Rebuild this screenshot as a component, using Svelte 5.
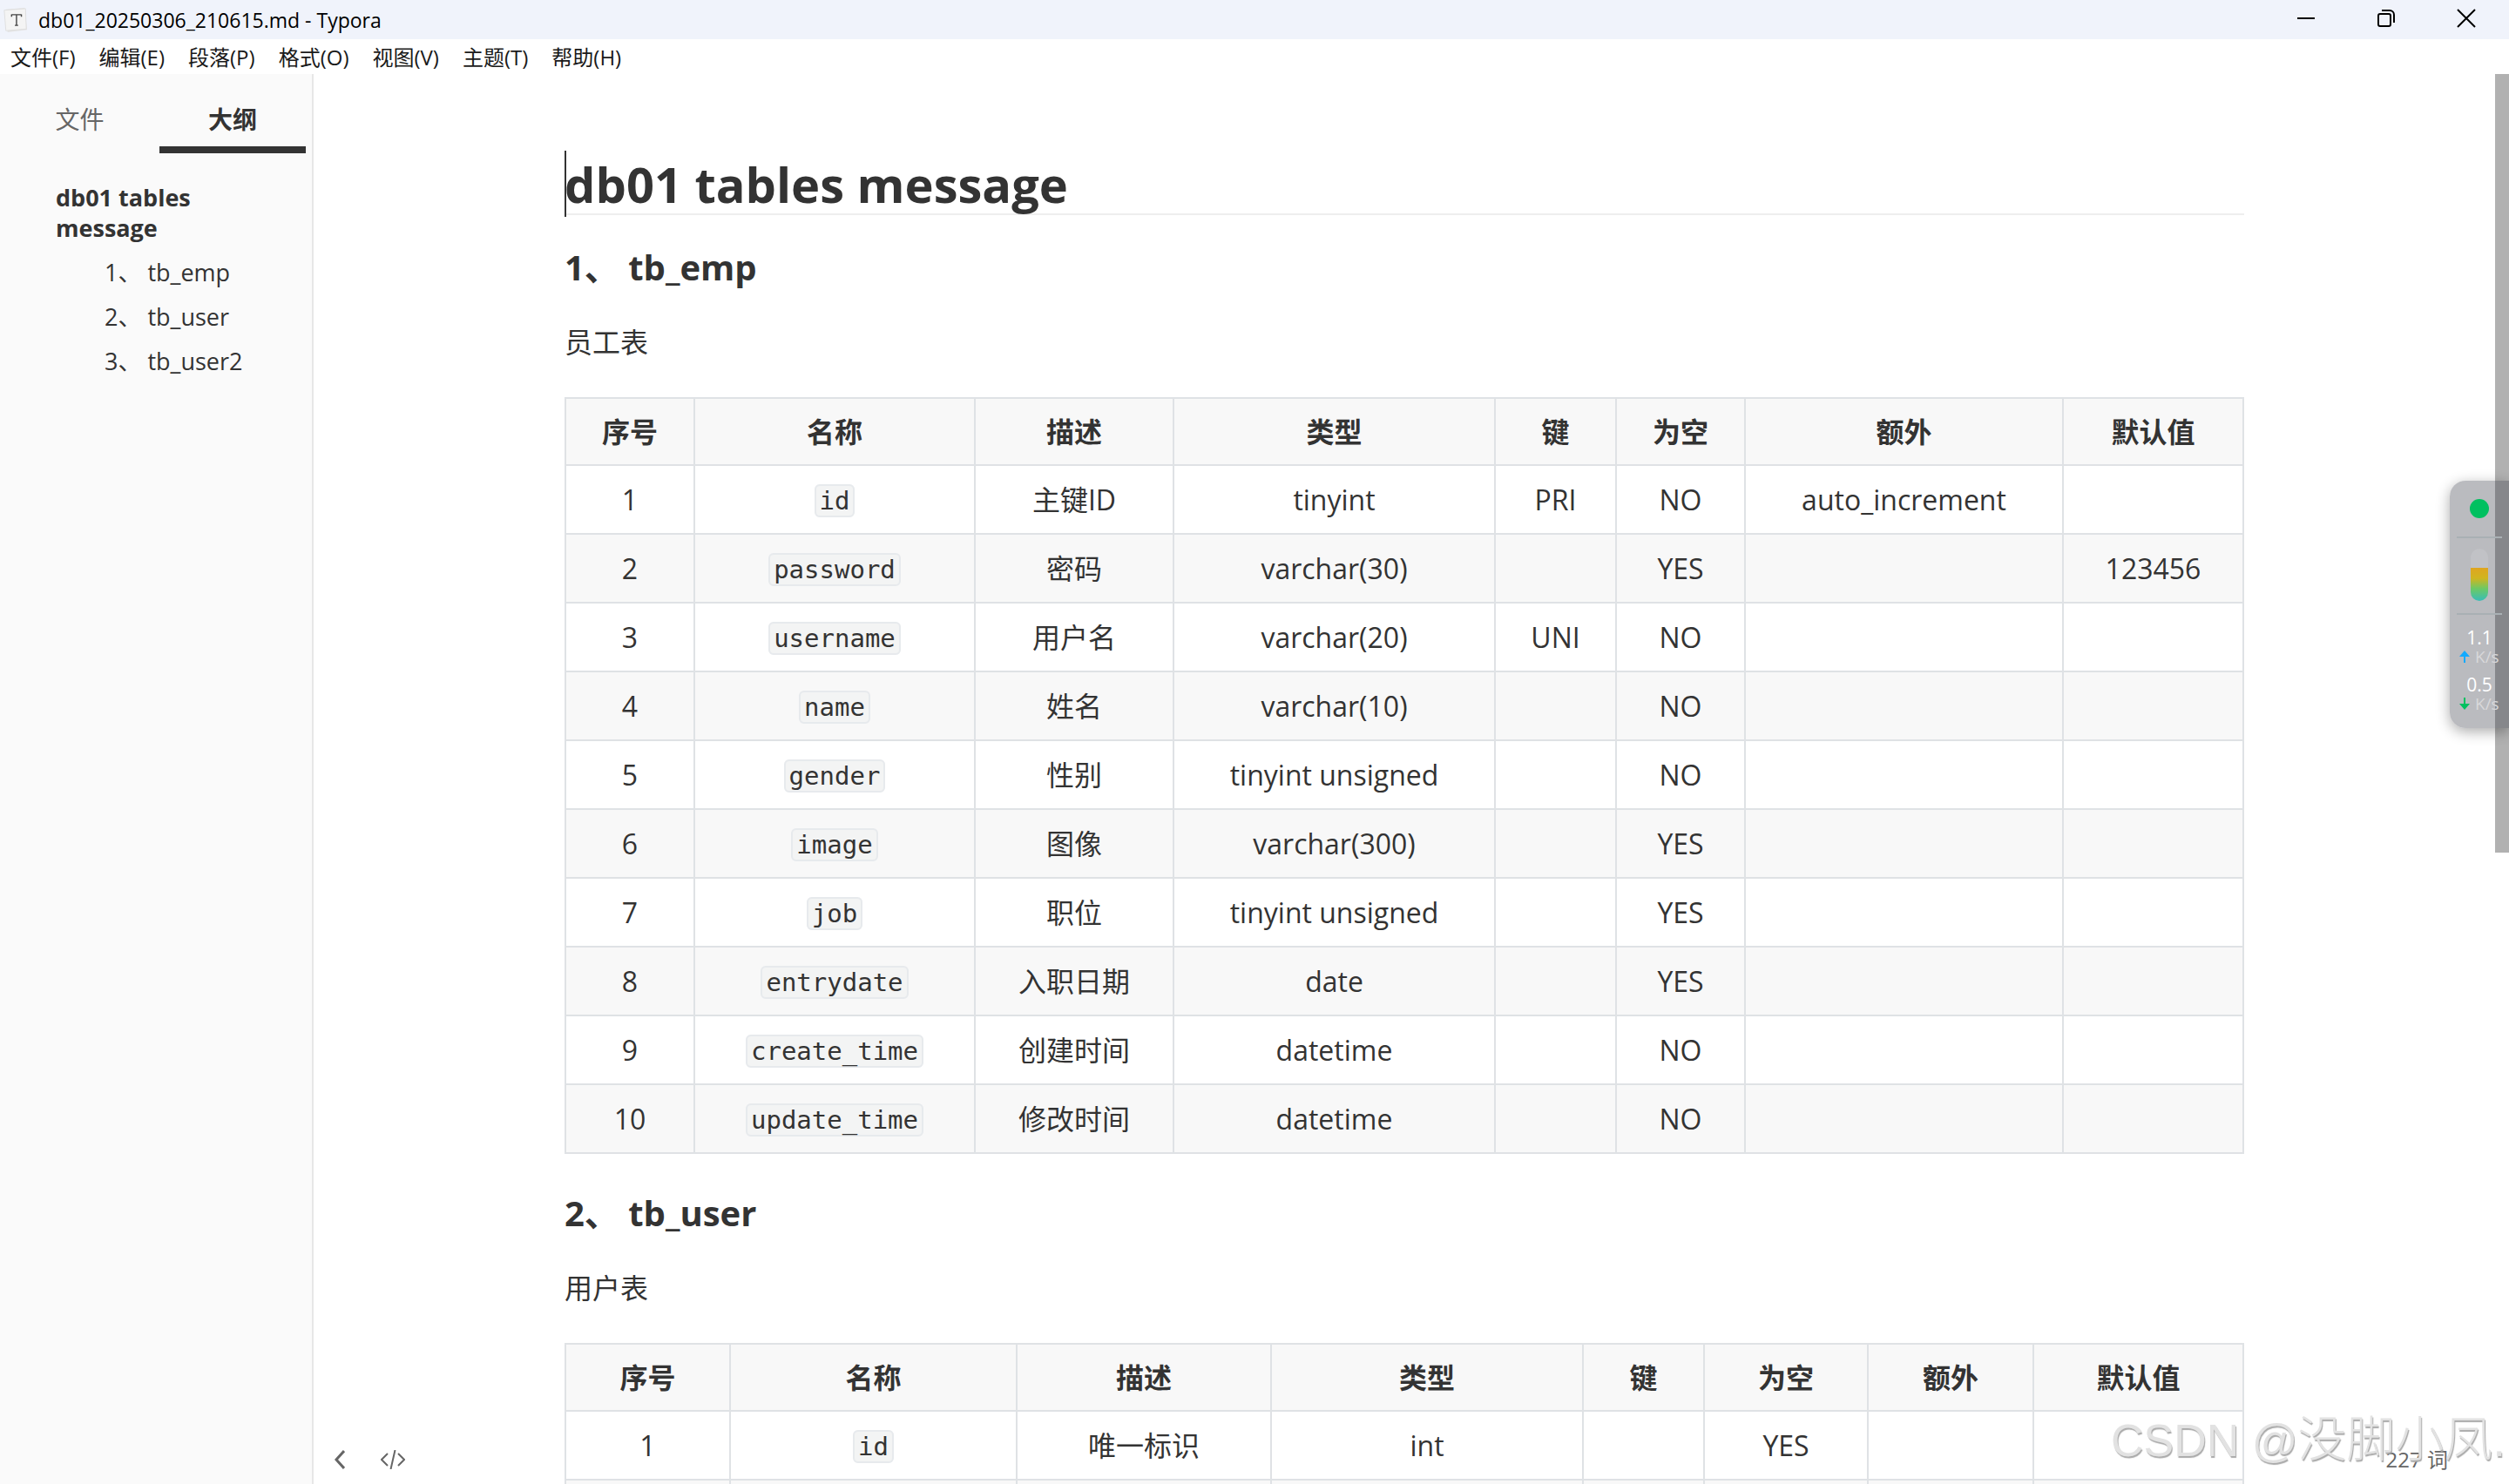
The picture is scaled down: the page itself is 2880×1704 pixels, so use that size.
<script>
  const menus = ['文件(F)', '编辑(E)', '段落(P)', '格式(O)', '视图(V)', '主题(T)', '帮助(H)'];
  const outline = ['1、 tb_emp', '2、 tb_user', '3、 tb_user2'];
  const head = ['序号', '名称', '描述', '类型', '键', '为空', '额外', '默认值'];
  const sections = [
    {
      title: '1、 tb_emp',
      note: '员工表',
      widths: [148, 322, 228, 369, 139, 148, 365, 207],
      rows: [
        ['1', 'id', '主键ID', 'tinyint', 'PRI', 'NO', 'auto_increment', ''],
        ['2', 'password', '密码', 'varchar(30)', '', 'YES', '', '123456'],
        ['3', 'username', '用户名', 'varchar(20)', 'UNI', 'NO', '', ''],
        ['4', 'name', '姓名', 'varchar(10)', '', 'NO', '', ''],
        ['5', 'gender', '性别', 'tinyint unsigned', '', 'NO', '', ''],
        ['6', 'image', '图像', 'varchar(300)', '', 'YES', '', ''],
        ['7', 'job', '职位', 'tinyint unsigned', '', 'YES', '', ''],
        ['8', 'entrydate', '入职日期', 'date', '', 'YES', '', ''],
        ['9', 'create_time', '创建时间', 'datetime', '', 'NO', '', ''],
        ['10', 'update_time', '修改时间', 'datetime', '', 'NO', '', '']
      ]
    },
    {
      title: '2、 tb_user',
      note: '用户表',
      widths: [189, 329, 292, 358, 139, 188, 190, 241],
      rows: [
        ['1', 'id', '唯一标识', 'int', '', 'YES', '', ''],
        ['', '', '', '', '', '', '', '']
      ]
    }
  ];
  const share = (w, all) => (w / all.reduce((a, b) => a + b, 0)) * 100;
</script>

<div class="window">
  <header class="titlebar">
    <svg class="appicon" viewBox="0 0 32 32" aria-hidden="true">
      <path d="M4 3 27 1l3 27-24 3z" fill="#e4e4e4" />
      <path d="M2 4 28 2l1 25-25 2z" fill="#f4f4f4" stroke="#dedede" />
      <path d="M11 9.500h12M17 9.500v13M11 9v3M23 9v3M15 22.500h4" fill="none" stroke="#444" stroke-width="1.500" />
    </svg>
    <span class="caption">db01_20250306_210615.md - Typora</span>
    <div class="controls">
      <button aria-label="最小化"><svg viewBox="0 0 20 20"><path d="M0 10h20" /></svg></button>
      <button aria-label="还原"><svg viewBox="0 0 20 20"><rect x="1" y="5" width="14" height="14" rx="2" /><path d="M5 1h9a5 5 0 0 1 5 5v9" /></svg></button>
      <button aria-label="关闭"><svg viewBox="0 0 20 20"><path d="M0 0l20 20M20 0 0 20" /></svg></button>
    </div>
  </header>

  <nav class="menubar">
    {#each menus as m}<button>{m}</button>{/each}
  </nav>

  <div class="body">
    <aside class="sidebar">
      <div class="tabs">
        <button>文件</button>
        <button class="active">大纲</button>
      </div>
      <nav class="outline">
        <a class="root" href="#top">db01 tables message</a>
        {#each outline as o, i}<a href={'#s' + i}>{o}</a>{/each}
      </nav>
    </aside>

    <main>
      <article>
        <h1 id="top">db01 tables message</h1>
        {#each sections as s, i}
          <h3 id={'s' + i}>{s.title}</h3>
          <p>{s.note}</p>
          <table>
            <colgroup>
              {#each s.widths as w}<col style:width={share(w, s.widths) + '%'} />{/each}
            </colgroup>
            <thead>
              <tr>{#each head as h}<th>{h}</th>{/each}</tr>
            </thead>
            <tbody>
              {#each s.rows as r}
                <tr>
                  {#each r as c, k}
                    <td>{#if k === 1 && c}<code>{c}</code>{:else}{c}{/if}</td>
                  {/each}
                </tr>
              {/each}
            </tbody>
          </table>
        {/each}
      </article>
      <div class="scrollbar"></div>
      <footer>
        <button class="back" aria-label="收起侧边栏"><svg viewBox="0 0 12 22"><path d="M11 1 2 11l9 10" /></svg></button>
        <button class="source" aria-label="源代码模式"><svg viewBox="0 0 28 22"><path d="M8 4 1 11l7 7M20 4l7 7-7 7M16.500 0l-5 22" /></svg></button>
        <span class="count">227 词</span>
      </footer>
    </main>
  </div>

  <div class="watermark">CSDN @<span>没脚小凤</span>.</div>

  <div class="monitor">
    <span class="dot"></span>
    <hr />
    <span class="gauge"></span>
    <hr />
    <div class="rate">
      <b>1.1</b>
      <span><svg viewBox="0 0 12 14"><path d="M6 0l6 7H7v7H5V7H0z" fill="#12aaff" /></svg>K/s</span>
    </div>
    <div class="rate">
      <b>0.5</b>
      <span><svg viewBox="0 0 12 14"><path d="M6 14l6-7H7V0H5v7H0z" fill="#00c060" /></svg>K/s</span>
    </div>
  </div>
</div>

<style>
  :global(body) { margin: 0; background: #fff; }
  * { box-sizing: border-box; }
  button { border: 0; padding: 0; background: none; font: inherit; color: inherit; }
  .window {
    position: relative;
    height: 100vh;
    display: flex;
    flex-direction: column;
    overflow: hidden;
    font-family: "Open Sans", "Noto Sans CJK SC", sans-serif;
    color: #333;
  }
  .titlebar {
    flex: none;
    height: 45px;
    display: flex;
    align-items: center;
    background: #f0f3fb;
    color: #000;
    font-size: 23px;
    line-height: 32px;
  }
  .appicon { width: 30px; height: 30px; margin: 0 11px 0 3px; }
  .caption { flex: 1; }
  .controls { display: flex; align-self: flex-start; padding-right: 3px; }
  .controls button { width: 92px; height: 42px; display: flex; align-items: center; justify-content: center; }
  .controls svg { width: 20px; height: 20px; fill: none; stroke: #000; stroke-width: 2; overflow: visible; }
  .menubar {
    flex: none;
    height: 40px;
    display: flex;
    align-items: center;
    gap: 27px;
    padding: 2px 0 0 12px;
    font-size: 24px;
    line-height: 32px;
    color: #1a1a1a;
  }
  .body { flex: 1; min-height: 0; display: flex; }
  .sidebar { flex: none; width: 360px; background: #fafafa; border-right: 2px solid #e7e7e7; font-size: 28px; }
  .tabs { display: flex; padding: 15px 7px 0 0; }
  .tabs button { flex: 1; height: 76px; padding-top: 4px; border-bottom: 8px solid transparent; color: #666; }
  .tabs .active { flex: none; width: 168px; color: #333; font-weight: 700; border-color: #333; }
  .outline { display: flex; flex-direction: column; gap: 16px; padding: 33px 64px; font-size: 27px; line-height: 35px; }
  .outline a { color: #333; text-decoration: none; padding-left: 56px; white-space: nowrap; }
  .outline .root { padding-left: 0; font-weight: 700; white-space: normal; }
  main { position: relative; flex: 1; min-width: 0; overflow: hidden; padding-right: 16px; }
  article { max-width: 1928px; margin: 0 auto; padding-top: 92px; font-size: 32px; line-height: 51px; }
  h1 { position: relative; margin: 0 0 30px; border-bottom: 2px solid #eee; font-size: 56px; line-height: 68px; }
  /* text caret at the start of the heading */
  h1::before { content: ""; position: absolute; left: 0; top: -4px; width: 2px; height: 76px; background: #333; }
  h3 { margin: 0 0 30px; font-size: 40px; line-height: 60px; }
  p { margin: 0 0 38px; }
  table { width: 100%; table-layout: fixed; border-collapse: collapse; margin-bottom: 38px; }
  th, td { height: 79px; padding: 0; border: 2px solid #dfe2e5; text-align: center; }
  th { height: 77px; font-weight: 700; }
  thead, tbody tr:nth-child(2n) { background: #f8f8f8; }
  code {
    padding: 0 4px;
    border: 2px solid #e7eaed;
    border-radius: 6px;
    background: #f3f4f4;
    font-family: "DejaVu Sans Mono", monospace;
    font-size: 29px;
  }
  .scrollbar { position: absolute; top: 0; right: 0; width: 16px; height: 894px; background: #b1b1b1; }
  footer {
    position: absolute;
    left: 0;
    right: 0;
    bottom: 0;
    height: 56px;
    display: flex;
    align-items: center;
    padding: 0 70px 0 24px;
    color: #666;
    font-size: 24px;
    line-height: 32px;
  }
  footer svg { display: block; fill: none; stroke: #666; stroke-width: 2; }
  .back svg { width: 12px; height: 22px; stroke-width: 3; }
  .source { margin-left: 41px; }
  .source svg { width: 28px; height: 22px; }
  .count { margin-left: auto; }
  .watermark {
    position: absolute;
    right: 4px;
    bottom: 14px;
    font-family: "Liberation Sans", "Noto Sans CJK SC", sans-serif;
    font-size: 52px;
    font-weight: 300;
    line-height: 72px;
    color: #e2e2e2;
    text-shadow: 1px 2px 1px #aaa;
  }
  .watermark span { font-size: 56px; }
  .monitor {
    position: absolute;
    top: 552px;
    right: 0;
    width: 68px;
    height: 284px;
    padding: 21px 0 0 8px;
    border-radius: 18px 0 0 18px;
    background: linear-gradient(to right, #babbbf 52px, #86878b 52px);
    box-shadow: 0 4px 16px #0005;
    color: #fff;
  }
  .monitor hr { height: 2px; margin: 0 8px 0 0; border: 0; background: #a9b0b4; }
  .dot { display: block; width: 22px; height: 22px; margin: 0 15px 21px; border-radius: 50%; background: #00c060; }
  .gauge {
    display: block;
    width: 20px;
    height: 60px;
    margin: 12px 16px 14px;
    border-radius: 10px;
    background: linear-gradient(#c1c2c6 22px, #dfa520 22px, #d0b520 34px, #6cc965 46px, #38bdb8);
  }
  .rate { width: 52px; height: 40px; margin-top: 14px; text-align: center; font-size: 21px; line-height: 24px; }
  .rate b { display: block; font-weight: 400; }
  .rate span { display: flex; align-items: center; gap: 6px; padding-left: 3px; height: 20px; font-size: 19px; line-height: 20px; color: #d8d8da; }
  .rate svg { width: 12px; height: 14px; }
</style>
